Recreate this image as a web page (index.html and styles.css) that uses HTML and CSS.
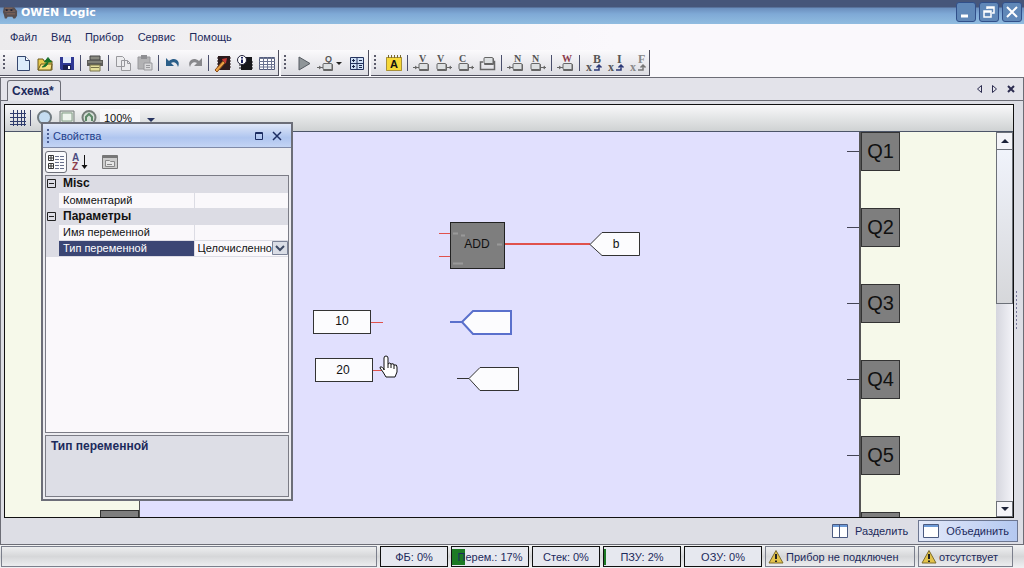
FILE: index.html
```html
<!DOCTYPE html>
<html lang="ru">
<head>
    <meta charset="UTF-8">
    <meta name="viewport" content="width=device-width, initial-scale=1.0">
    <title>OWEN Logic</title>
    <link rel="stylesheet" href="styles.css">
</head>
<body>

    <!-- Shared toolbar symbols -->
    <svg class="symbols" aria-hidden="true">
        <symbol id="box-in" viewBox="0 0 18 18">
            <path d="M0 13.500h6M2 12l2 1.500-2 1.500" fill="none" stroke="#666"/>
            <rect x="6" y="10" width="10" height="7" rx="1" fill="#666"/>
            <rect x="6" y="9.500" width="9" height="6" rx="1" fill="#dde0e2" stroke="#666"/>
        </symbol>
        <symbol id="box-out" viewBox="0 0 18 18">
            <rect x="2" y="10" width="10" height="7" rx="1" fill="#666"/>
            <rect x="2" y="9.500" width="9" height="6" rx="1" fill="#dde0e2" stroke="#666"/>
            <path d="M12 13.500h5M16 12l-2 1.500 2 1.500" fill="none" stroke="#666"/>
        </symbol>
        <symbol id="x-to" viewBox="0 0 18 18">
            <path d="M9 16h5v-4M11.500 13.500L14 11l2.500 2.500" fill="none" stroke="currentColor" stroke-width="1.500"/>
        </symbol>
        <symbol id="warn" viewBox="0 0 16 16">
            <path d="M8 1.500L15 14H1z" fill="#e3c34a" stroke="#7d6c2c" stroke-linejoin="round"/>
            <path d="M8 5v5M8 11.500v1.500" stroke="#222" stroke-width="2"/>
        </symbol>
    </svg>

    <div class="window">
        <!-- Title bar -->
        <header class="titlebar">
            <svg width="16" height="16" viewBox="0 0 17 16">
                <path d="M2 3h11l3 4v5l-2 3h-2l-1-2H6l-1 2H3l-1-4-1-3z" fill="#574e50"/>
                <path d="M3 4h8M3 7h11M5 10h9" stroke="#8c6a5c"/>
                <path d="M4 6h2M9 6h2" stroke="#242331" stroke-width="2"/>
            </svg>
            <h1>OWEN Logic</h1>
            <div class="window-buttons">
                <button aria-label="Свернуть"><svg width="18" height="18"><path d="M4 13h7" stroke="#fff" stroke-width="3"/></svg></button>
                <button aria-label="Восстановить"><svg width="18" height="18"><path d="M7 6V4h7v6h-2M7 5h7M4 8h7v6H4zM4 9h7" fill="none" stroke="#fff" stroke-width="1.500"/></svg></button>
                <button aria-label="Закрыть"><svg width="18" height="18"><path d="M4 4l10 10M14 4L4 14" stroke="#fff" stroke-width="2"/></svg></button>
            </div>
        </header>

        <!-- Menu -->
        <nav class="menu">
            <button>Файл</button>
            <button>Вид</button>
            <button>Прибор</button>
            <button>Сервис</button>
            <button>Помощь</button>
        </nav>

        <!-- Toolbars -->
        <div class="toolbars">
            <div class="strip">
                <button aria-label="Создать"><svg width="18" height="18"><path d="M3.500 2.500h8l4 4v10h-12z" fill="#dcecfb" stroke="#34466e"/><path d="M11.500 2.500v4h4" fill="#fff" stroke="#34466e"/></svg></button>
                <button aria-label="Открыть"><svg width="18" height="18"><path d="M2 5h5l1 2h8v9H2z" fill="#e8c94e" stroke="#6c5a1c"/><path d="M2 16l3-6h11l-1 6z" fill="#f5df7e" stroke="#6c5a1c"/><path d="M6 13c4 0 6-2 6-6M8.500 8L12 3.500 15.500 8z" fill="#16702a" stroke="#16702a"/></svg></button>
                <button aria-label="Сохранить"><svg width="18" height="18"><path d="M2 3h14v13H3l-1-1z" fill="#2f3894"/><path d="M5 3h8v6H5z" fill="#e4ebfa"/><path d="M5 11h8v5H5z" fill="#1b2052"/><path d="M10 12h2v3h-2z" fill="#fff"/></svg></button>
                <span class="sep"></span>
                <button aria-label="Печать"><svg width="18" height="18"><path d="M4 2h10v4H4z" fill="#8a8a80" stroke="#444"/><path d="M1 6h16v6H1z" fill="#5c5c58"/><path d="M2 8h14" stroke="#a5a598"/><path d="M4 11h10v6H4z" fill="#e5df9c" stroke="#77724a"/><path d="M5 13.500h8" stroke="#77724a"/></svg></button>
                <span class="sep"></span>
                <button aria-label="Копировать"><svg width="18" height="18"><path d="M2.500 2.500h6l2 2v8h-8zM7.500 6.500h6l3 3v7h-9z" fill="#ececee" stroke="#98989c"/><path d="M13.500 6.500v3h3" fill="none" stroke="#98989c"/></svg></button>
                <button aria-label="Вставить"><svg width="18" height="18"><path d="M2 3h12v12H2z" fill="#b2b2b4" stroke="#98989c"/><path d="M5 1h6v4H5z" fill="#8e8e92"/><path d="M8 9h8v7H8z" fill="#d8d8da" stroke="#98989c"/><path d="M10 11.500h4M10 13.500h4" stroke="#98989c"/></svg></button>
                <span class="sep"></span>
                <button aria-label="Отменить"><svg width="18" height="18"><path d="M2 4v8h8L7 9c3-2 6 0 7 4 3-6-3-11-9-6z" fill="#2b5e88"/></svg></button>
                <button aria-label="Повторить"><svg width="18" height="18"><path d="M16 4v8H8l3-3C8 7 5 9 4 13 1 7 7 2 13 7z" fill="#88888c"/></svg></button>
                <span class="sep"></span>
                <button aria-label="Записать в прибор"><svg width="18" height="18"><path d="M4 2h12v14H4z" fill="#2d1c1e"/><path d="M3 4h14M3 7h14M3 10h14M3 13h14" stroke="#2d1c1e"/><path d="M8 5l5-1-1 5-2 1z" fill="#c43a35"/><path d="M1 16l8-9 2 2-8 9z" fill="#eba344" stroke="#8a4a19"/></svg></button>
                <button aria-label="Информация"><svg width="18" height="18"><path d="M5 3h11v13H5z" fill="#17171b"/><path d="M3 8h14M3 11h14M3 14h14" stroke="#17171b"/><circle cx="6" cy="6" r="4.500" fill="#fff" stroke="#24243c"/><path d="M6 3v1.500M6 5.500v3.500" stroke="#1c2360" stroke-width="2"/></svg></button>
                <button aria-label="Таблица"><svg width="18" height="18"><path d="M1.500 3.500h15v12h-15z" fill="#fff" stroke="#545d7c"/><path d="M1 4.500h16M1 7.500h16M1 10.500h16M1 13h16M5.500 3v13M9.500 3v13M13.500 3v13" stroke="#6b7390"/></svg></button>
            </div>
            <div class="strip">
                <button aria-label="Пуск"><svg width="18" height="18"><path d="M4 3l11 6.500L4 16z" fill="#8f9599" stroke="#565b62"/></svg></button>
                <button class="wide" aria-label="Выход Q"><svg width="26" height="18"><text class="glyph sans" x="7" y="8">Q</text><use href="#box-in" x="-1" width="18" height="18"/><path d="M18 8h6l-3 3z" fill="#222"/></svg></button>
                <button aria-label="Калькулятор"><svg width="18" height="18"><path d="M2.500 3.500h13v12h-13z" fill="#cfe0f7" stroke="#24335e"/><path d="M2 9.500h14M9 3v13" stroke="#24335e" stroke-width="1"/><path d="M4 6.500h3M5.500 5v3M11 6.500h3M4 12.500h3M5.500 11v3M11 11.500h3M11 13.500h3" stroke="#1a2548"/></svg></button>
            </div>
            <div class="strip">
                <button aria-label="Комментарий"><svg width="18" height="18"><path d="M1 3h16v14H1z" fill="#f6d838"/><path d="M1.500 3.500h15v13h-15z" fill="none" stroke="#a8913a"/><path d="M3.500 1v3M6.500 1v3M9.500 1v3M12.500 1v3M15.500 1v3" stroke="#77682f"/><text class="glyph bold" x="5" y="14">A</text></svg></button>
                <span class="sep"></span>
                <button aria-label="Вход V"><svg width="18" height="18"><text class="glyph" x="6" y="8">V</text><use href="#box-in"/></svg></button>
                <button aria-label="Выход V"><svg width="18" height="18"><text class="glyph" x="2" y="8">V</text><use href="#box-out"/></svg></button>
                <button aria-label="Константа"><svg width="18" height="18"><text class="glyph" x="2" y="8">C</text><use href="#box-out"/></svg></button>
                <button aria-label="Обратная связь"><svg width="18" height="18"><path d="M4 8H1.500v7.500h14V7.500H14" fill="none" stroke="#666" stroke-width="1.500"/><rect x="5" y="4" width="10" height="7" rx="1" fill="#666"/><rect x="5" y="3.500" width="9" height="6" rx="1" fill="#dde0e2" stroke="#666"/></svg></button>
                <span class="sep"></span>
                <button aria-label="Сетевой вход"><svg width="18" height="18"><text class="glyph" x="7" y="8">N</text><use href="#box-in"/></svg></button>
                <button aria-label="Сетевой выход"><svg width="18" height="18"><text class="glyph" x="3" y="8">N</text><use href="#box-out"/></svg></button>
                <span class="sep"></span>
                <button aria-label="Запись"><svg width="18" height="18"><text class="glyph red" x="5" y="8">W</text><use href="#box-in"/></svg></button>
                <span class="sep"></span>
                <button aria-label="В Boolean"><svg class="navy" width="18" height="18"><text class="glyph big" x="8" y="9">B</text><text class="glyph big" x="1" y="17">x</text><use href="#x-to"/></svg></button>
                <button aria-label="В Integer"><svg class="navy" width="18" height="18"><text class="glyph big" x="10" y="9">I</text><text class="glyph big" x="1" y="17">x</text><use href="#x-to"/></svg></button>
                <button aria-label="В Float"><svg class="grey" width="18" height="18"><text class="glyph big" x="9" y="9">F</text><text class="glyph big" x="1" y="17">x</text><use href="#x-to"/></svg></button>
            </div>
        </div>

        <!-- Document area -->
        <main class="workspace">
            <div class="tabs">
                <button class="tab">Схема*</button>
                <div class="tab-tools">
                    <button aria-label="Предыдущая"><svg width="8" height="10"><path d="M6.500 1.500v7L2.500 5z" fill="none" stroke="#2c2c50"/></svg></button>
                    <button aria-label="Следующая"><svg width="8" height="10"><path d="M1.500 1.500v7l4-3.500z" fill="none" stroke="#2c2c50"/></svg></button>
                    <button aria-label="Закрыть вкладку"><svg width="8" height="10"><path d="M1 2l6 6M7 2L1 8" stroke="#2c2c50" stroke-width="2"/></svg></button>
                </div>
            </div>

            <div class="body">
                <section class="editor">
                    <div class="view-tools">
                        <button aria-label="Сетка"><svg width="18" height="18"><path d="M1 4.500h16M1 8.500h16M1 12.500h16M4.500 1v16M8.500 1v16M12.500 1v16M1 15.500h16M15.500 1v16" stroke="#2f3c6c"/></svg></button>
                        <span class="sep"></span>
                        <button aria-label="Масштаб"><svg width="18" height="18"><circle cx="8.500" cy="8.500" r="6.500" fill="#c5dcf0" stroke="#707b80" stroke-width="2"/><path d="M13 13l4 4" stroke="#866" stroke-width="2"/></svg></button>
                        <button aria-label="Вписать"><svg width="18" height="18"><path d="M2 2h14v13H2z" fill="#d9dfd9" stroke="#777f7c"/><path d="M4 4h10v8H4z" fill="#eef4ee" stroke="#84a088"/></svg></button>
                        <button aria-label="Исходный масштаб"><svg width="18" height="18"><circle cx="9" cy="8.500" r="6.500" fill="#d5dfd6" stroke="#747d78" stroke-width="2"/><path d="M6 12V8l3-3 3 3v4" fill="none" stroke="#5c8867" stroke-width="2"/></svg></button>
                        <input class="zoom" type="text" value="100%" aria-label="Масштаб в процентах">
                        <button aria-label="Выбрать масштаб"><svg width="18" height="18"><path d="M5 9h8l-4 4z" fill="#26335f"/></svg></button>
                    </div>

                    <div class="sheet">
                        <div class="inputs">
                            <div class="port"></div>
                        </div>
                        <div class="canvas">
                            <svg class="diagram" width="100%" height="100%">
                                <g class="wire">
                                    <path d="M299 101.500h11"/>
                                    <path d="M299 124.500h11"/>
                                    <path d="M364 112h86" stroke-width="2"/>
                                    <path d="M231 190.500h12"/>
                                    <path d="M233 238.500h9"/>
                                </g>
                                <rect class="block" x="310.500" y="90.500" width="54" height="46"/>
                                <path d="M313 101.500h5M321 103.500h4M313 131.500h10M357 112.500h5" stroke="#999" stroke-width="2"/>
                                <text x="337" y="116">ADD</text>

                                <path class="tag" d="M450 112.500l12-12h37.500v23H462z"/>
                                <text x="476" y="116">b</text>

                                <rect class="tag" x="173.500" y="178.500" width="57" height="23"/>
                                <text x="202" y="193">10</text>

                                <rect class="tag" x="175.500" y="226.500" width="57" height="23"/>
                                <text x="203" y="242">20</text>

                                <path class="tag selected" d="M310 190h12l11-11h38v23h-38l-11-12"/>
                                <path class="tag" d="M317 246.500h12l11-11h38.500v23H340l-11-12"/>

                                <!-- hand pointer -->
                                <path d="M244 238V226q0-2 2-2t2 2v6q2-2 3 0 3-1 3 1 3-1 3 2v5l-2 5h-9l-3-5-3-4q0-3 4 1z" fill="#fff" stroke="#111"/>
                                <path d="M248 232v4M251 232v4M254 233v4" stroke="#111"/>
                            </svg>
                        </div>
                        <div class="outputs">
                            <div class="port">Q1</div>
                            <div class="port">Q2</div>
                            <div class="port">Q3</div>
                            <div class="port">Q4</div>
                            <div class="port">Q5</div>
                            <div class="port"></div>
                        </div>
                        <div class="scrollbar">
                            <button aria-label="Вверх"><svg width="8" height="4"><path d="M0 4h8L4 0z" fill="#1c2238"/></svg></button>
                            <div class="thumb"></div>
                            <button aria-label="Вниз"><svg width="8" height="4"><path d="M0 0h8L4 4z" fill="#1c2238"/></svg></button>
                        </div>
                    </div>
                </section>
                <div class="splitter"></div>
            </div>

            <div class="layout-bar">
                <button><svg width="16" height="14"><path d="M.5.5h15v13H.5z" fill="#fff" stroke="#4b5a80"/><path d="M1 2h14" stroke="#6d9bd8" stroke-width="2"/><path d="M7.500 1v13" stroke="#4b5a80"/></svg>Разделить</button>
                <button class="active"><svg width="16" height="14"><path d="M.5.5h15v13H.5z" fill="#fff" stroke="#4b5a80"/><path d="M1 2h14" stroke="#6d9bd8" stroke-width="2"/></svg>Объединить</button>
            </div>

            <!-- Floating properties panel -->
            <aside class="panel">
                <div class="panel-title">
                    <h2>Свойства</h2>
                    <button aria-label="Развернуть"><svg width="10" height="10"><path d="M1.500 1.500h7v7h-7zM1 2.500h8" fill="none" stroke="#1c2d62"/></svg></button>
                    <button aria-label="Закрыть панель"><svg width="10" height="10"><path d="M1 1l8 8M9 1L1 9" stroke="#1c2d62" stroke-width="1.500"/></svg></button>
                </div>
                <div class="panel-tools">
                    <button class="pressed" aria-label="По категориям"><svg width="18" height="18"><path d="M1.500 2.500h5v5h-5zM1.500 10.500h5v5h-5z" fill="#fff" stroke="#333"/><path d="M2 5h4M4 3v4M2 13h4M4 11v4" stroke="#333"/><path d="M8 3.500h4M13 3.500h4M8 6.500h4M13 6.500h4M8 9.500h4M13 9.500h4M8 12.500h4M13 12.500h4M8 15.500h4M13 15.500h4" stroke="#68708c"/></svg></button>
                    <button aria-label="По алфавиту"><svg width="18" height="18"><text class="glyph az" x="1" y="8">A</text><text class="glyph az red" x="1" y="17">Z</text><path d="M13.500 2v12" stroke="#111"/><path d="M10.500 12h6l-3 4z" fill="#111"/></svg></button>
                    <button class="pages" aria-label="Страницы свойств"><svg width="18" height="18"><path d="M1.500 2.500h15v13h-15z" fill="#ccc" stroke="#777"/><path d="M1 4h16" stroke="#777" stroke-width="2"/><path d="M4.500 7.500h4l1 1h4v5h-9zM6 11.500h5" fill="#e6e6e6" stroke="#888"/></svg></button>
                </div>
                <div class="grid-box">
                    <table class="props">
                        <colgroup>
                            <col class="col-gutter">
                            <col class="col-name">
                            <col>
                        </colgroup>
                        <tr class="group">
                            <td><svg width="9" height="9"><path d="M.5.5h8v8h-8zM2 4.500h5" fill="none" stroke="#222"/></svg></td>
                            <th colspan="2">Misc</th>
                        </tr>
                        <tr>
                            <td></td>
                            <th><label for="comment">Комментарий</label></th>
                            <td><input type="text" id="comment"></td>
                        </tr>
                        <tr class="group">
                            <td><svg width="9" height="9"><path d="M.5.5h8v8h-8zM2 4.500h5" fill="none" stroke="#222"/></svg></td>
                            <th colspan="2">Параметры</th>
                        </tr>
                        <tr>
                            <td></td>
                            <th><label for="var-name">Имя переменной</label></th>
                            <td><input type="text" id="var-name"></td>
                        </tr>
                        <tr class="current">
                            <td></td>
                            <th><label for="var-type">Тип переменной</label></th>
                            <td>
                                <div class="combo">
                                    <select id="var-type"><option>Целочисленно</option></select>
                                    <svg width="16" height="14"><path d="M.5.5h15v13H.5z" fill="#dadde6" stroke="#7b8297"/><path d="M4 5l4 4 4-4" fill="none" stroke="#3d4963" stroke-width="2"/></svg>
                                </div>
                            </td>
                        </tr>
                    </table>
                </div>
                <div class="hint">Тип переменной</div>
            </aside>
        </main>

        <!-- Status bar -->
        <footer class="status">
            <div class="cell message"></div>
            <div class="cell meter short"><span>ФБ: 0%</span></div>
            <div class="cell meter"><i style="width: 17%"></i><span>Перем.: 17%</span></div>
            <div class="cell meter short"><span>Стек: 0%</span></div>
            <div class="cell meter"><i style="width: 2%"></i><span>ПЗУ: 2%</span></div>
            <div class="cell meter"><span>ОЗУ: 0%</span></div>
            <div class="cell device"><svg width="16" height="16"><use href="#warn"/></svg>Прибор не подключен</div>
            <div class="cell link"><svg width="16" height="16"><use href="#warn"/></svg>отсутствует</div>
        </footer>
    </div>

</body>
</html>
```
FILE: styles.css
```css
* {
    box-sizing: border-box;
}

body {
    margin: 0;
    font-family: "Liberation Sans", Arial, sans-serif;
    font-size: 11px;
    color: #1c2a5c;
}

button {
    display: flex;
    align-items: center;
    justify-content: center;
    padding: 0;
    border: none;
    background: transparent;
    font: inherit;
    color: inherit;
}

h1,
h2 {
    margin: 0;
    flex: 1;
}

svg {
    display: block;
    flex: none;
    overflow: visible;
}

.symbols {
    position: absolute;
    width: 0;
    height: 0;
}

.window {
    display: flex;
    flex-direction: column;
    height: 100vh;
    overflow: hidden;
    background-color: #f4f3f7;
}

/* Title bar */
.titlebar {
    display: flex;
    align-items: center;
    gap: 3px;
    height: 24px;
    flex: none;
    padding: 0 2px;
    background: linear-gradient(#46567a 0, #46567a 7px, #6b8fbe 8px, #7fa9d6 14px, #90bce0 24px);
}

.titlebar h1 {
    font-family: "DejaVu Sans", sans-serif;
    font-size: 11px;
    font-weight: bold;
    color: #fff;
}

.window-buttons {
    display: flex;
    gap: 3px;
}

.window-buttons button {
    width: 20px;
    height: 20px;
    border: 1px solid #31508a;
    border-radius: 3px;
    background-color: #6088b8;
}

/* Menu */
.menu {
    display: flex;
    gap: 14px;
    height: 26px;
    flex: none;
    padding: 0 10px;
    background: linear-gradient(90deg, #ecebed, #faf8fc 60%);
}

/* Toolbars */
.toolbars {
    display: flex;
    gap: 2px;
    height: 27px;
    flex: none;
    background-color: #faf9fc;
}

.strip {
    display: flex;
    align-items: center;
    height: 26px;
    padding-left: 12px;
    border-right: 1px solid #4e4e5c;
    border-bottom: 1px solid #4e4e5c;
    background: linear-gradient(#fbfafc, #dcdce2);
}

.strip::before {
    content: "";
    width: 2px;
    height: 16px;
    margin-left: -9px;
    margin-right: 7px;
    background: repeating-linear-gradient(#5c5c6c 0, #5c5c6c 2px, transparent 2px, transparent 4px);
}

.strip button {
    width: 22px;
    height: 22px;
}

.strip .wide {
    width: 31px;
}

.sep {
    width: 6px;
    height: 16px;
    margin: 0 3px 0 -3px;
    border-right: 1px solid #4a4f6c;
}

.glyph {
    font-family: "Liberation Serif", serif;
    font-size: 10px;
    font-weight: bold;
    fill: #555;
}

.glyph.sans {
    font-family: "Liberation Sans", sans-serif;
    font-size: 9px;
}

.glyph.bold {
    font-family: "Liberation Sans", sans-serif;
    font-size: 11px;
    fill: #111;
}

.glyph.big {
    font-size: 12px;
}

.glyph.az {
    font-family: "Liberation Sans", sans-serif;
    fill: #4b4b80;
}

.glyph.red {
    fill: #8c3a4a;
}

.navy {
    color: #2c3a78;
}

.grey {
    color: #777;
}

.grey .glyph {
    fill: #888;
}

/* Document area */
.workspace {
    position: relative;
    display: flex;
    flex-direction: column;
    flex: 1;
    min-height: 0;
    border: 1px solid #6c6d76;
    background-color: #dddee5;
}

.tabs {
    display: flex;
    justify-content: space-between;
    align-items: flex-end;
    height: 23px;
    flex: none;
    padding: 0 8px 0 6px;
    border-bottom: 1px solid #6c6d76;
    background-color: #e3e3ea;
}

.tab {
    height: 21px;
    margin-bottom: -1px;
    padding: 0 6px 0 4px;
    border: 1px solid #6c6d76;
    border-bottom: none;
    border-radius: 3px 3px 0 0;
    background-color: #e3e4ea;
    font-size: 12px;
    font-weight: bold;
}

.tab-tools {
    display: flex;
    align-self: center;
    gap: 8px;
}

.body {
    display: flex;
    flex: 1;
    min-height: 0;
    padding: 3px 0 0 3px;
}

.editor {
    display: flex;
    flex-direction: column;
    flex: 1;
    min-width: 0;
    border: 1px solid #111;
}

.splitter {
    width: 9px;
    margin: 186px 0 188px;
    padding-left: 2px;
    background: radial-gradient(#77779a 1px, transparent 1px) 1px 0 / 3px 4px repeat-y;
}

.view-tools {
    display: flex;
    align-items: center;
    height: 27px;
    flex: none;
    padding-left: 2px;
    border-bottom: 1px solid #4c5568;
    background: linear-gradient(#f8f8fa, #cfd2d3);
}

.view-tools button {
    width: 22px;
}

.view-tools .sep {
    margin: 0 3px 0 -4px;
}

.zoom {
    width: 40px;
    height: 18px;
    padding: 0 0 0 4px;
    border: none;
    background-color: #f8f8fa;
    font: inherit;
    color: #111;
}

/* Scheme sheet */
.sheet {
    display: flex;
    flex: 1;
    min-height: 0;
    background-color: #f6f9ea;
}

.inputs,
.outputs {
    display: flex;
    flex-direction: column;
    width: 135px;
    flex: none;
    overflow: hidden;
}

.inputs {
    width: 134px;
    align-items: flex-end;
    justify-content: flex-end;
}

.inputs .port {
    height: 7px;
    border-bottom: none;
}

.outputs {
    gap: 37px;
}

.port {
    display: flex;
    align-items: center;
    justify-content: center;
    width: 39px;
    height: 39px;
    flex: none;
    border: 1px solid #333;
    background-color: #7e7e7e;
    font-size: 20px;
    color: #111;
}

/* the stripes on the right are the pins of the outputs */
.canvas {
    flex: 1;
    min-width: 0;
    border-left: 1px solid #555;
    border-right: 2px solid #555;
    background: repeating-linear-gradient(transparent 0, transparent 19px, #445 19px, #445 20px, transparent 20px, transparent 76px) right top / 12px 100% no-repeat #e1e0fe;
}

.diagram text {
    font-size: 12px;
    text-anchor: middle;
    fill: #111;
}

.diagram .wire {
    fill: none;
    stroke: #e0524c;
}

.block {
    fill: #7e7e7e;
    stroke: #222;
}

.tag {
    fill: #fcfcfe;
    stroke: #333;
}

.selected {
    stroke: #5a70cc;
    stroke-width: 2;
}

.scrollbar {
    display: flex;
    flex-direction: column;
    width: 17px;
    flex: none;
    background: linear-gradient(90deg, #d5d6de, #f3f3f8);
}

.scrollbar button {
    height: 18px;
    flex: none;
    border: 1px solid #6c7078;
    background-color: #f4f4f8;
}

.scrollbar button:last-child {
    height: 16px;
    margin-top: auto;
}

.thumb {
    height: 40%;
    border: 1px solid #6c7078;
    border-top: none;
    background: linear-gradient(#f0f3fb, #d6d7da);
}

.layout-bar {
    display: flex;
    justify-content: flex-end;
    align-items: center;
    height: 26px;
    flex: none;
    gap: 2px;
    padding-right: 5px;
}

.layout-bar button {
    gap: 7px;
    height: 22px;
    padding: 0 8px 0 4px;
}

.layout-bar .active {
    border: 1px solid #6c7690;
    background: linear-gradient(90deg, #e4eafa, #b4c8f0);
}

/* Properties panel */
.panel {
    position: absolute;
    left: 40px;
    top: 44px;
    display: flex;
    flex-direction: column;
    width: 252px;
    height: 379px;
    padding: 0 2px 2px;
    border: 2px solid #6c6e78;
    background-color: #ececf0;
}

.panel-title {
    display: flex;
    align-items: center;
    gap: 8px;
    height: 24px;
    flex: none;
    margin: 0 -2px;
    padding: 0 9px 0 4px;
    border-bottom: 1px solid #7f8aa8;
    background: linear-gradient(#dfe7f8, #afc5ef 60%, #c3d4f4);
}

.panel-title::before {
    content: "";
    width: 2px;
    height: 14px;
    margin-right: -4px;
    background: repeating-linear-gradient(#4c5f94 0, #4c5f94 2px, transparent 2px, transparent 4px);
}

.panel-title h2 {
    font-size: 11px;
    font-weight: normal;
    color: #1f3f8a;
}

.panel-tools {
    display: flex;
    align-items: center;
    height: 27px;
    flex: none;
    gap: 2px;
}

.panel-tools button {
    width: 22px;
    height: 22px;
}

.panel-tools .pressed {
    border: 1px solid #6c6e78;
    border-radius: 3px;
    background-color: #fafafc;
}

.panel-tools .pages {
    margin-left: 6px;
}

.grid-box {
    flex: 1;
    margin-bottom: 2px;
    border: 1px solid #7b7c86;
    background-color: #faf8fb;
}

.props {
    width: 100%;
    table-layout: fixed;
    border-collapse: collapse;
    color: #111;
}

.col-gutter {
    width: 13px;
}

.col-name {
    width: 135px;
}

.props td,
.props th {
    height: 16px;
    padding: 0;
    border-bottom: 1px solid #dcdce4;
    line-height: 15px;
    text-align: left;
    font-weight: normal;
    white-space: nowrap;
}

.props td:first-child {
    padding-left: 1px;
    background-color: #dcdce4;
}

.props th {
    padding-left: 4px;
    border-right: 1px solid #dcdce4;
}

.props .group th {
    background-color: #dcdce4;
    font-size: 12px;
    font-weight: bold;
}

.props .current th {
    background-color: #3b4674;
    color: #fff;
}

.props input {
    display: block;
    width: 100%;
    height: 15px;
    padding: 0 4px;
    border: none;
    background: transparent;
    font: inherit;
}

.combo {
    display: flex;
    align-items: center;
}

.combo select {
    flex: 1;
    width: 0;
    height: 15px;
    padding: 0 0 0 3px;
    border: none;
    appearance: none;
    background: transparent;
    font: inherit;
    color: #111;
}

.hint {
    height: 62px;
    flex: none;
    padding: 3px 5px;
    border: 1px solid #7b7c86;
    background-color: #dddee6;
    font-size: 12px;
    font-weight: bold;
}

/* Status bar */
.status {
    display: flex;
    gap: 3px;
    height: 23px;
    flex: none;
    padding: 1px 11px 1px 1px;
    background: linear-gradient(#f2f3f4, #d6d7d9 50%, #f0f1f3);
}

.cell {
    display: flex;
    align-items: center;
    border: 1px solid #7b7f8c;
    white-space: nowrap;
}

.message {
    flex: 1;
}

.meter {
    display: grid;
    width: 78px;
    border-color: #111;
    background-color: #e6e8ef;
}

.short {
    width: 68px;
}

.meter i,
.meter span {
    grid-area: 1 / 1;
}

.meter i {
    height: 16px;
    background-color: #1c7a24;
}

.meter span {
    justify-self: center;
}

.device,
.link {
    width: 150px;
    gap: 2px;
    padding-left: 2px;
}

.link {
    width: 95px;
}
```
